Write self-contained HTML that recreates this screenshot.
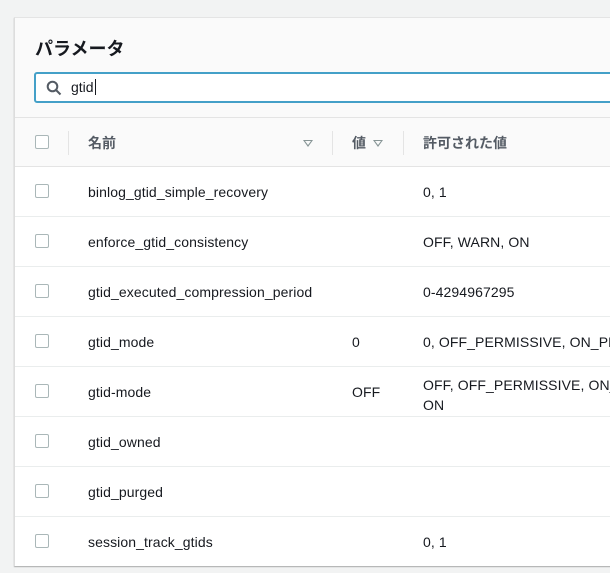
<!DOCTYPE html>
<html><head><meta charset="utf-8"><style>
body{margin:0;width:610px;height:573px;background:#f2f3f3;overflow:hidden;font-family:"Liberation Sans","Noto Sans CJK JP",sans-serif;color:#16191f;position:relative}
.panel{position:absolute;left:14px;top:17px;width:596px;height:548px;background:#fff;border-left:1px solid #ddd;border-top:1px solid #e4e4e4;box-shadow:0 1px 1px rgba(0,0,0,.3);overflow:hidden}
.head{position:absolute;left:0;top:0;width:100%;height:148px;background:#fafafa;border-bottom:1px solid #e4e4e4}
.title{position:absolute;left:20px;top:17px;font-size:18px;font-weight:bold}
.search{position:absolute;left:19px;top:54px;width:600px;height:27px;border:2px solid #44a0c8;border-radius:3px;background:#fff}
.search span{position:absolute;left:35px;top:5px;font-size:14px}
.hr{position:absolute;left:0;top:99px;width:100%;border-top:1px solid #e4e4e4}
.cb{position:absolute;left:20px;width:12px;height:12px;border:1px solid #aab7b8;border-radius:2px;background:#fff}
.th{position:absolute;top:115px;font-size:14px;font-weight:bold;color:#545b64}
.sep{position:absolute;top:113px;height:24px;border-left:1px solid #e4e4e4}
.row{position:absolute;left:0;width:100%;height:49px;border-bottom:1px solid #eaeded;font-size:14px;letter-spacing:0.1px}
.row .cb{top:17px}
.row .n{position:absolute;left:73px;top:17px}
.row .v{position:absolute;left:337px;top:17px}
.row .a{position:absolute;left:408px;top:17px;white-space:nowrap}
.tri{display:inline-block;width:0;height:0;border-left:5px solid transparent;border-right:5px solid transparent;border-top:7px solid #879596;position:relative;}
.tri:after{content:"";position:absolute;left:-3px;top:-6px;border-left:3px solid transparent;border-right:3px solid transparent;border-top:4px solid #fafafa}
</style></head><body>
<div class="panel">
<div class="head">
<div class="title">パラメータ</div>
<div class="search"><svg style="position:absolute;left:10px;top:6px" width="16" height="16" viewBox="0 0 16 16"><circle cx="6.5" cy="6.5" r="4.8" fill="none" stroke="#545b64" stroke-width="2"/><path d="M10 10l4.5 4.5" stroke="#545b64" stroke-width="2"/></svg><span>gtid<span style="position:static;border-left:1px solid #16191f;margin-left:1px"></span></span></div>
<div class="hr"></div>
<div class="cb" style="top:117px"></div>
<div class="sep" style="left:53px"></div>
<div class="th" style="left:73px">名前</div>
<div class="tri" style="position:absolute;left:288px;top:122px"></div>
<div class="sep" style="left:317px"></div>
<div class="th" style="left:337px">値</div>
<div class="tri" style="position:absolute;left:358px;top:122px"></div>
<div class="sep" style="left:388px"></div>
<div class="th" style="left:408px">許可された値</div>
</div>
<div class="row" style="top:149px"><div class="cb"></div><div class="n">binlog_gtid_simple_recovery</div><div class="a">0, 1</div></div>
<div class="row" style="top:199px"><div class="cb"></div><div class="n">enforce_gtid_consistency</div><div class="a">OFF, WARN, ON</div></div>
<div class="row" style="top:249px"><div class="cb"></div><div class="n">gtid_executed_compression_period</div><div class="a">0-4294967295</div></div>
<div class="row" style="top:299px"><div class="cb"></div><div class="n">gtid_mode</div><div class="v">0</div><div class="a">0, OFF_PERMISSIVE, ON_PERMISSIVE</div></div>
<div class="row" style="top:349px"><div class="cb"></div><div class="n">gtid-mode</div><div class="v">OFF</div><div class="a" style="top:8px;line-height:20px">OFF, OFF_PERMISSIVE, ON_PERMISSIVE,<br>ON</div></div>
<div class="row" style="top:399px"><div class="cb"></div><div class="n">gtid_owned</div></div>
<div class="row" style="top:449px"><div class="cb"></div><div class="n">gtid_purged</div></div>
<div class="row" style="top:499px;border-bottom:none"><div class="cb"></div><div class="n">session_track_gtids</div><div class="a">0, 1</div></div>
</div>
</body></html>
